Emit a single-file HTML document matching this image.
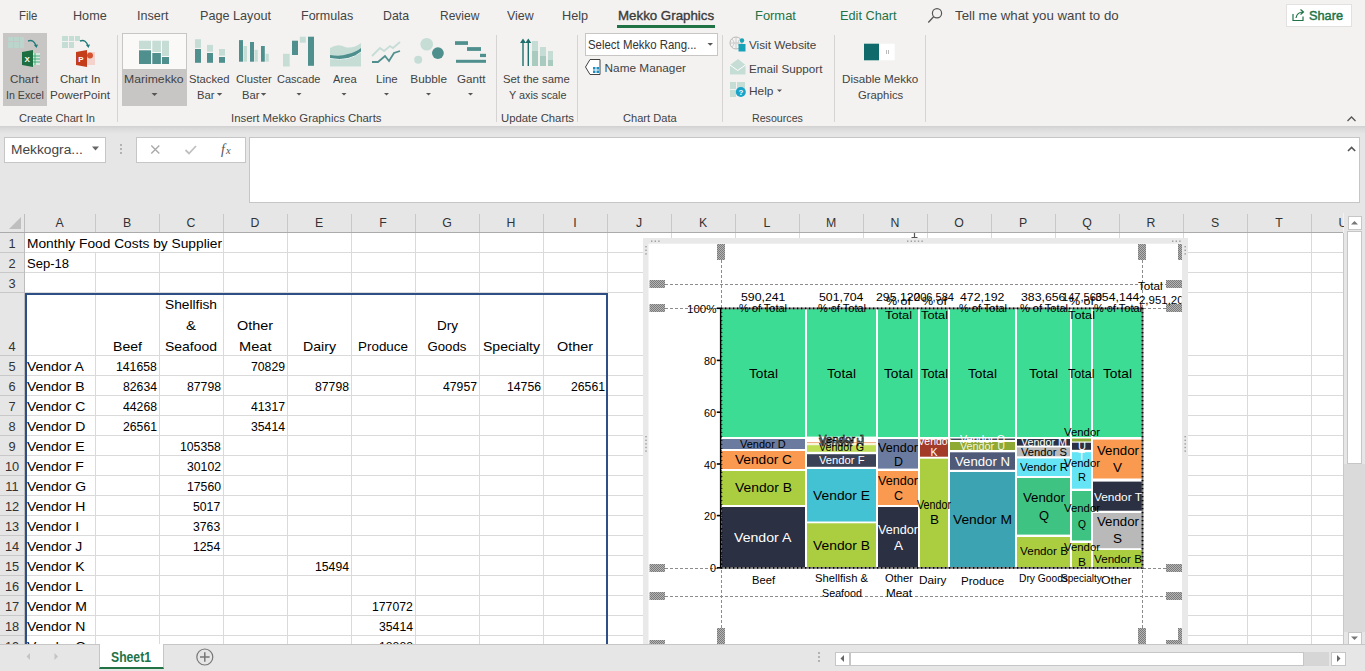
<!DOCTYPE html>
<html><head><meta charset="utf-8"><style>
*{margin:0;padding:0;box-sizing:border-box}
html,body{width:1365px;height:671px;overflow:hidden;background:#f3f2f1;position:relative;font-family:"Liberation Sans",sans-serif}
.t{position:absolute;white-space:pre;line-height:normal;transform-origin:0 0}
.a{position:absolute}
</style></head><body>
<!-- ribbon -->
<div class=a style="left:0;top:0;width:1365px;height:126px;background:#f3f2f1"></div>
<div class=a style="left:617px;top:25px;width:98px;height:3px;background:#217346"></div>
<div class=a style="left:1285.5px;top:3.5px;width:66.5px;height:23px;background:#fff;border:1px solid #e3e1df"></div>
<svg class=a style="left:0;top:0" width="1365" height="130">
 <!-- search -->
 <circle cx="937" cy="13.3" r="4.6" fill="none" stroke="#555" stroke-width="1.2"/>
 <line x1="933.6" y1="16.8" x2="928.3" y2="22.5" stroke="#555" stroke-width="1.3"/>
 <!-- share icon -->
 <path d="M1293 14 v6.5 h10 v-4" fill="none" stroke="#217346" stroke-width="1.2"/>
 <path d="M1296 18 q1 -6 7 -6 M1300.5 9.5 l3 2.5 l-3 2.5" fill="none" stroke="#217346" stroke-width="1.2"/>
 <!-- separators -->
 <g stroke="#d6d4d2" stroke-width="1">
  <line x1="117.5" y1="35" x2="117.5" y2="122"/><line x1="496.5" y1="35" x2="496.5" y2="122"/>
  <line x1="577.5" y1="35" x2="577.5" y2="122"/><line x1="722.5" y1="35" x2="722.5" y2="122"/>
  <line x1="834.5" y1="35" x2="834.5" y2="122"/><line x1="925.5" y1="35" x2="925.5" y2="122"/>
 </g>
 <!-- chart in excel highlight -->
 <rect x="3" y="33" width="44" height="73" fill="#c8c6c4"/>
 <!-- marimekko button -->
 <rect x="122" y="69" width="65" height="37" fill="#c8c6c4"/>
 <rect x="122.5" y="33.5" width="64" height="36" fill="#faf9f8" stroke="#c8c6c4"/>
 <!-- excel icon -->
 <g fill="#b9d9cf" opacity="0.8"><rect x="8" y="37" width="5" height="4"/><rect x="14" y="37" width="5" height="4"/><rect x="8" y="42" width="5" height="6"/><rect x="14" y="42" width="5" height="6"/><rect x="20" y="37" width="4" height="11"/></g>
 <path d="M28 41 q6 -2 8 5" fill="none" stroke="#1f7a7a" stroke-width="1.4"/><path d="M34 45 l2.5 3 l1.5 -3.5z" fill="#1f7a7a"/>
 <rect x="28" y="53" width="12" height="12" fill="#d5e8dd"/>
 <g stroke="#21a366" stroke-width="0.8"><line x1="29" y1="56" x2="40" y2="56"/><line x1="29" y1="59" x2="40" y2="59"/><line x1="29" y1="62" x2="40" y2="62"/><line x1="35" y1="53" x2="35" y2="65"/></g>
 <path d="M22 52 l11 -2 v17 l-11 -2z" fill="#1d6f42"/>
 <text x="24.5" y="62" font-family="Liberation Sans" font-size="8" font-weight="700" fill="#fff">X</text>
 <!-- powerpoint icon -->
 <g fill="#b9d9cf" opacity="0.8"><rect x="62" y="36" width="6" height="5"/><rect x="69" y="36" width="5" height="5"/><rect x="75" y="36" width="5" height="5"/><rect x="62" y="42" width="6" height="6"/><rect x="69" y="42" width="5" height="6"/></g>
 <path d="M80 41 q6 -2 8 5" fill="none" stroke="#1f7a7a" stroke-width="1.4"/><path d="M86 45 l2.5 3 l1.5 -3.5z" fill="#1f7a7a"/>
 <rect x="84" y="52" width="11" height="13" fill="#f4d3cc"/>
 <circle cx="90" cy="55.5" r="3" fill="#d35230"/>
 <path d="M76 52 l11 -2 v17 l-11 -2z" fill="#c43e1c"/>
 <text x="78.3" y="62" font-family="Liberation Sans" font-size="8" font-weight="700" fill="#fff">P</text>
 <!-- marimekko icon -->
 <g fill="#c6ddd6"><rect x="139" y="40.7" width="12" height="8.3"/><rect x="152.3" y="40.7" width="8.6" height="11.3"/><rect x="162" y="40.7" width="7" height="15.3"/></g>
 <g fill="#4f8f8e"><rect x="139" y="50.3" width="12" height="13.7"/><rect x="152.3" y="53" width="8.6" height="11"/><rect x="162" y="57" width="7" height="7"/></g>
 <!-- stacked bar -->
 <g fill="#c6ddd6"><rect x="195" y="39.2" width="6" height="8.7"/><rect x="207" y="44.9" width="6" height="6.7"/><rect x="219" y="49" width="6" height="6.6"/></g>
 <g fill="#4f8f8e"><rect x="195" y="49" width="6" height="13.8"/><rect x="207" y="53" width="6" height="9.8"/><rect x="219" y="57" width="6" height="5.8"/></g>
 <!-- cluster bar -->
 <g fill="#4f8f8e"><rect x="239" y="40.1" width="4" height="21.6"/><rect x="250" y="42" width="4" height="19.7"/><rect x="261" y="46" width="3.8" height="15.7"/></g>
 <g fill="#c6ddd6"><rect x="243.5" y="46" width="3.5" height="15.7"/><rect x="254.6" y="49.8" width="3.2" height="11.9"/><rect x="265.5" y="53.8" width="3.3" height="7.9"/></g>
 <!-- cascade -->
 <g fill="#c6ddd6"><rect x="283" y="53.8" width="6.7" height="12.7"/><rect x="299.8" y="36.7" width="6" height="6"/></g>
 <g fill="#4f8f8e"><rect x="292" y="40.7" width="6" height="14.3"/><rect x="308" y="36.7" width="6" height="29.1"/></g>
 <!-- area -->
 <path d="M330 48 q8 -5 15 -1 q8 2 16 -4 v23.5 h-31z" fill="#c6ddd6"/>
 <path d="M330 55 q10 2 18 -1 q8 -2 13 -6 v4 q-6 5 -13 6.5 q-9 2 -18 0z" fill="#4f8f8e"/>
 <path d="M330 58.5 q10 2 18 0 q8 -2 13 -6.5" fill="none" stroke="#e9f5f1" stroke-width="1"/>
 <!-- line -->
 <path d="M372 56 l8 -8 l4 3 l6 -5 l3 2 l7 -6" fill="none" stroke="#c6ddd6" stroke-width="1.8"/>
 <path d="M372 62 h6 l7 -6 l4 5 l5 -8 l6 -2" fill="none" stroke="#4f8f8e" stroke-width="1.8"/>
 <!-- bubble -->
 <circle cx="426.7" cy="44.2" r="6.3" fill="#c6ddd6"/><circle cx="437.9" cy="53.1" r="5.9" fill="#4f8f8e"/><circle cx="418.2" cy="59.8" r="4" fill="#c6ddd6"/>
 <!-- gantt -->
 <g fill="#4f8f8e"><rect x="455" y="41.2" width="13" height="3.7"/><rect x="467" y="47.1" width="14" height="3.8"/><rect x="480" y="53.8" width="6" height="3.3"/><rect x="456" y="59.8" width="30" height="3"/></g>
 <!-- dropdown arrows -->
 <g fill="#555">
  <path d="M151.5 93 h6 l-3 3z"/><path d="M216.8 93 h5.5 l-2.75 2.75z"/><path d="M260.8 93 h5.5 l-2.75 2.75z"/>
  <path d="M296.5 93 h5 l-2.5 2.5z"/><path d="M341.5 93 h5 l-2.5 2.5z"/><path d="M384 93 h5 l-2.5 2.5z"/>
  <path d="M426 93 h5 l-2.5 2.5z"/><path d="M468 93 h5 l-2.5 2.5z"/><path d="M777 89.5 h5 l-2.5 2.5z"/>
 </g>
 <!-- update charts icon -->
 <g stroke="#1f6e6e" stroke-width="1.4"><line x1="523" y1="41" x2="523" y2="66"/><line x1="528.3" y1="41" x2="528.3" y2="66"/></g>
 <g fill="#1f6e6e"><path d="M520 43 l3 -4.5 l3 4.5z"/><path d="M525.3 43 l3 -4.5 l3 4.5z"/></g>
 <g fill="#c6ddd6"><rect x="532" y="41" width="6" height="25"/><rect x="540" y="47" width="6" height="19"/><rect x="548" y="51" width="5" height="15"/></g>
 <g fill="#a9cbbf"><rect x="532" y="51" width="6" height="15"/><rect x="540" y="56" width="6" height="10"/><rect x="548" y="60" width="5" height="6"/></g>
 <!-- select box -->
 <rect x="585.5" y="33.5" width="132" height="22" fill="#fff" stroke="#c8c6c4"/>
 <path d="M707.5 43 h5.5 l-2.75 2.75z" fill="#555"/>
 <!-- name manager icon -->
 <path d="M590 59.5 h10 v15 h-10 l-4.5 -7.5z" fill="#fff" stroke="#444" stroke-width="1"/>
 <g fill="#1f8fbf"><rect x="593" y="67" width="2.5" height="2.5"/><rect x="596.5" y="67" width="2.5" height="2.5"/><rect x="593" y="70.5" width="2.5" height="2.5"/><rect x="596.5" y="70.5" width="2.5" height="2.5"/></g>
 <!-- visit website -->
 <circle cx="736" cy="43" r="6" fill="none" stroke="#b7b7b7" stroke-width="1"/>
 <path d="M730 43 h12 M736 37 v12 M732 39 q4 4 0 8 M740 39 q-4 4 0 8" stroke="#c4c4c4" fill="none" stroke-width="0.8"/>
 <circle cx="742" cy="40.5" r="2.2" fill="#17a2b8"/><path d="M738.5 44 h7 v7.5 h-7z" fill="#17a2b8"/>
 <!-- email -->
 <path d="M730 65 l8 -6 l7.5 6 v9.5 h-15.5z" fill="#c6ddd6"/><path d="M730 65 l7.7 5.5 l7.8 -5.5" fill="none" stroke="#fff" stroke-width="1"/>
 <!-- help -->
 <g fill="#c6ddd6"><rect x="730" y="82" width="6" height="7"/><rect x="737" y="82" width="8" height="7"/><rect x="730" y="90" width="6" height="7"/></g>
 <circle cx="740.8" cy="92" r="5" fill="#1aa3c8"/>
 <text x="738.6" y="95.2" font-family="Liberation Sans" font-size="8" font-weight="700" fill="#fff">?</text>
 <!-- disable toggle -->
 <rect x="864" y="43.7" width="15" height="16.6" fill="#0f6b6b"/>
 <rect x="879" y="43.7" width="15.7" height="16.6" fill="#fff"/>
 <g fill="#bbb"><rect x="886" y="50" width="1" height="4"/><rect x="888" y="50" width="1" height="4"/></g>
 <!-- collapse chevron -->
 <path d="M1347.5 121 l4 -4 l4 4" fill="none" stroke="#555" stroke-width="1.3"/>
</svg>
<!-- ribbon bottom / formula area -->
<div class=a style="left:0;top:126px;width:1365px;height:87px;background:#e6e6e6"></div>
<div class=a style="left:0;top:126px;width:1365px;height:8px;background:linear-gradient(#d0d0d0,#dadada 30%,#e6e6e6)"></div>
<div class=a style="left:4px;top:137px;width:102px;height:26px;background:#fff;border:1px solid #c6c6c6"></div>
<div class=a style="left:136px;top:137px;width:110px;height:26px;background:#fff;border:1px solid #c6c6c6"></div>
<div class=a style="left:249px;top:137px;width:1111px;height:66px;background:#fff;border:1px solid #c6c6c6"></div>
<svg class=a style="left:0;top:126px" width="1365" height="90">
 <path d="M92 21 h7 l-3.5 4z" fill="#666" transform="translate(0,-0.5)"/>
 <g fill="#9a9a9a"><circle cx="121" cy="19" r="0.9"/><circle cx="121" cy="23" r="0.9"/><circle cx="121" cy="27" r="0.9"/></g>
 <path d="M151.3 19.5 l8 8 M159.3 19.5 l-8 8" stroke="#a8a8a8" stroke-width="1.3"/>
 <path d="M185.5 24 l3.5 3.5 l7 -7.5" fill="none" stroke="#c0c0c0" stroke-width="1.8"/>
 <text x="221" y="27.5" font-family="Liberation Serif" font-style="italic" font-size="14" fill="#555">f</text>
 <text x="226" y="28" font-family="Liberation Serif" font-style="italic" font-size="10.5" fill="#555">x</text>
 <path d="M1348 25 l3.6 -3.6 l3.6 3.6" fill="none" stroke="#555" stroke-width="1.6"/>
</svg>
<svg style="position:absolute;left:0;top:0" width="1365" height="671">
<rect x="0" y="213" width="1343" height="20" fill="#e6e6e6"/>
<rect x="0" y="233" width="24" height="411" fill="#e6e6e6"/>
<rect x="24.5" y="233" width="1318.5" height="411" fill="#fff"/>
<line x1="95.5" y1="214" x2="95.5" y2="232" stroke="#c8c8c8"/>
<line x1="159.5" y1="214" x2="159.5" y2="232" stroke="#c8c8c8"/>
<line x1="223.5" y1="214" x2="223.5" y2="232" stroke="#c8c8c8"/>
<line x1="287.5" y1="214" x2="287.5" y2="232" stroke="#c8c8c8"/>
<line x1="351.5" y1="214" x2="351.5" y2="232" stroke="#c8c8c8"/>
<line x1="415.5" y1="214" x2="415.5" y2="232" stroke="#c8c8c8"/>
<line x1="479.5" y1="214" x2="479.5" y2="232" stroke="#c8c8c8"/>
<line x1="543.5" y1="214" x2="543.5" y2="232" stroke="#c8c8c8"/>
<line x1="607.5" y1="214" x2="607.5" y2="232" stroke="#c8c8c8"/>
<line x1="671.5" y1="214" x2="671.5" y2="232" stroke="#c8c8c8"/>
<line x1="735.5" y1="214" x2="735.5" y2="232" stroke="#c8c8c8"/>
<line x1="799.5" y1="214" x2="799.5" y2="232" stroke="#c8c8c8"/>
<line x1="863.5" y1="214" x2="863.5" y2="232" stroke="#c8c8c8"/>
<line x1="927.5" y1="214" x2="927.5" y2="232" stroke="#c8c8c8"/>
<line x1="991.5" y1="214" x2="991.5" y2="232" stroke="#c8c8c8"/>
<line x1="1055.5" y1="214" x2="1055.5" y2="232" stroke="#c8c8c8"/>
<line x1="1119.5" y1="214" x2="1119.5" y2="232" stroke="#c8c8c8"/>
<line x1="1183.5" y1="214" x2="1183.5" y2="232" stroke="#c8c8c8"/>
<line x1="1247.5" y1="214" x2="1247.5" y2="232" stroke="#c8c8c8"/>
<line x1="1311.5" y1="214" x2="1311.5" y2="232" stroke="#c8c8c8"/>
<line x1="24.5" y1="214" x2="24.5" y2="644" stroke="#bdbdbd"/>
<line x1="0" y1="232.5" x2="1343" y2="232.5" stroke="#ababab"/>
<polygon points="21,217 21,229 9,229" fill="#bfbfbf"/>
<line x1="0" y1="252.5" x2="24" y2="252.5" stroke="#c8c8c8"/>
<line x1="25" y1="252.5" x2="1343" y2="252.5" stroke="#dadada"/>
<line x1="0" y1="272.5" x2="24" y2="272.5" stroke="#c8c8c8"/>
<line x1="25" y1="272.5" x2="1343" y2="272.5" stroke="#dadada"/>
<line x1="0" y1="292.5" x2="24" y2="292.5" stroke="#c8c8c8"/>
<line x1="25" y1="292.5" x2="1343" y2="292.5" stroke="#dadada"/>
<line x1="0" y1="355.5" x2="24" y2="355.5" stroke="#c8c8c8"/>
<line x1="25" y1="355.5" x2="1343" y2="355.5" stroke="#dadada"/>
<line x1="0" y1="375.5" x2="24" y2="375.5" stroke="#c8c8c8"/>
<line x1="25" y1="375.5" x2="1343" y2="375.5" stroke="#dadada"/>
<line x1="0" y1="395.5" x2="24" y2="395.5" stroke="#c8c8c8"/>
<line x1="25" y1="395.5" x2="1343" y2="395.5" stroke="#dadada"/>
<line x1="0" y1="415.5" x2="24" y2="415.5" stroke="#c8c8c8"/>
<line x1="25" y1="415.5" x2="1343" y2="415.5" stroke="#dadada"/>
<line x1="0" y1="435.5" x2="24" y2="435.5" stroke="#c8c8c8"/>
<line x1="25" y1="435.5" x2="1343" y2="435.5" stroke="#dadada"/>
<line x1="0" y1="455.5" x2="24" y2="455.5" stroke="#c8c8c8"/>
<line x1="25" y1="455.5" x2="1343" y2="455.5" stroke="#dadada"/>
<line x1="0" y1="475.5" x2="24" y2="475.5" stroke="#c8c8c8"/>
<line x1="25" y1="475.5" x2="1343" y2="475.5" stroke="#dadada"/>
<line x1="0" y1="495.5" x2="24" y2="495.5" stroke="#c8c8c8"/>
<line x1="25" y1="495.5" x2="1343" y2="495.5" stroke="#dadada"/>
<line x1="0" y1="515.5" x2="24" y2="515.5" stroke="#c8c8c8"/>
<line x1="25" y1="515.5" x2="1343" y2="515.5" stroke="#dadada"/>
<line x1="0" y1="535.5" x2="24" y2="535.5" stroke="#c8c8c8"/>
<line x1="25" y1="535.5" x2="1343" y2="535.5" stroke="#dadada"/>
<line x1="0" y1="555.5" x2="24" y2="555.5" stroke="#c8c8c8"/>
<line x1="25" y1="555.5" x2="1343" y2="555.5" stroke="#dadada"/>
<line x1="0" y1="575.5" x2="24" y2="575.5" stroke="#c8c8c8"/>
<line x1="25" y1="575.5" x2="1343" y2="575.5" stroke="#dadada"/>
<line x1="0" y1="595.5" x2="24" y2="595.5" stroke="#c8c8c8"/>
<line x1="25" y1="595.5" x2="1343" y2="595.5" stroke="#dadada"/>
<line x1="0" y1="615.5" x2="24" y2="615.5" stroke="#c8c8c8"/>
<line x1="25" y1="615.5" x2="1343" y2="615.5" stroke="#dadada"/>
<line x1="0" y1="635.5" x2="24" y2="635.5" stroke="#c8c8c8"/>
<line x1="25" y1="635.5" x2="1343" y2="635.5" stroke="#dadada"/>
<line x1="0" y1="655.5" x2="24" y2="655.5" stroke="#c8c8c8"/>
<line x1="25" y1="655.5" x2="1343" y2="655.5" stroke="#dadada"/>
<line x1="95.5" y1="253" x2="95.5" y2="644" stroke="#dadada"/>
<line x1="159.5" y1="253" x2="159.5" y2="644" stroke="#dadada"/>
<line x1="223.5" y1="233" x2="223.5" y2="644" stroke="#dadada"/>
<line x1="287.5" y1="233" x2="287.5" y2="644" stroke="#dadada"/>
<line x1="351.5" y1="233" x2="351.5" y2="644" stroke="#dadada"/>
<line x1="415.5" y1="233" x2="415.5" y2="644" stroke="#dadada"/>
<line x1="479.5" y1="233" x2="479.5" y2="644" stroke="#dadada"/>
<line x1="543.5" y1="233" x2="543.5" y2="644" stroke="#dadada"/>
<line x1="607.5" y1="233" x2="607.5" y2="644" stroke="#dadada"/>
<line x1="671.5" y1="233" x2="671.5" y2="644" stroke="#dadada"/>
<line x1="735.5" y1="233" x2="735.5" y2="644" stroke="#dadada"/>
<line x1="799.5" y1="233" x2="799.5" y2="644" stroke="#dadada"/>
<line x1="863.5" y1="233" x2="863.5" y2="644" stroke="#dadada"/>
<line x1="927.5" y1="233" x2="927.5" y2="644" stroke="#dadada"/>
<line x1="991.5" y1="233" x2="991.5" y2="644" stroke="#dadada"/>
<line x1="1055.5" y1="233" x2="1055.5" y2="644" stroke="#dadada"/>
<line x1="1119.5" y1="233" x2="1119.5" y2="644" stroke="#dadada"/>
<line x1="1183.5" y1="233" x2="1183.5" y2="644" stroke="#dadada"/>
<line x1="1247.5" y1="233" x2="1247.5" y2="644" stroke="#dadada"/>
<line x1="1311.5" y1="233" x2="1311.5" y2="644" stroke="#dadada"/>
<line x1="1343.5" y1="233" x2="1343.5" y2="644" stroke="#c8c8c8"/>
<rect x="26" y="294" width="581" height="360" fill="none" stroke="#2d4f86" stroke-width="2"/>
</svg>
<svg style="position:absolute;left:0;top:0" width="1365" height="671" viewBox="0 0 1365 671">
<defs><pattern id="chk" width="2" height="2" patternUnits="userSpaceOnUse"><rect width="2" height="2" fill="#b4b4b4"/><rect width="1" height="1" fill="#7a7a7a"/><rect x="1" y="1" width="1" height="1" fill="#7a7a7a"/></pattern><clipPath id="gclip"><rect x="0" y="233" width="1343" height="411"/></clipPath></defs>
<g clip-path="url(#gclip)">
<rect x="643" y="238" width="545" height="420" fill="#e9e9e9"/>
<rect x="648.5" y="243.7" width="533.5" height="420" fill="#fff"/>
<rect x="721" y="308" width="84" height="129.0" fill="#3ddc94"/>
<rect x="721" y="439" width="84" height="10.0" fill="#6b7b9f"/>
<rect x="721" y="451" width="84" height="18.0" fill="#fa9a50"/>
<rect x="721" y="471" width="84" height="34.0" fill="#aace40"/>
<rect x="721" y="507" width="84" height="60.0" fill="#2b3142"/>
<rect x="807" y="308" width="69" height="128.6" fill="#3ddc94"/>
<rect x="807" y="442.1" width="69" height="0.9" fill="#f0a880"/>
<rect x="807" y="443.4" width="69" height="1.2" fill="#f3efc2"/>
<rect x="807" y="445.2" width="69" height="6.6" fill="#bfdc55"/>
<rect x="807" y="454.2" width="69" height="12.6" fill="#3b4256"/>
<rect x="807" y="469" width="69" height="52.5" fill="#42c2d3"/>
<rect x="807" y="523.3" width="69" height="43.7" fill="#aace40"/>
<rect x="878" y="308" width="40" height="129.0" fill="#3ddc94"/>
<rect x="878" y="439" width="40" height="29.6" fill="#6b7b9f"/>
<rect x="878" y="471" width="40" height="34.0" fill="#fa9a50"/>
<rect x="878" y="507" width="40" height="60.0" fill="#2b3142"/>
<rect x="920" y="308" width="28" height="129.0" fill="#3ddc94"/>
<rect x="920" y="439.5" width="28" height="17.2" fill="#a33b29"/>
<rect x="920" y="458.7" width="28" height="108.3" fill="#aace40"/>
<rect x="950" y="308" width="65" height="129.0" fill="#3ddc94"/>
<rect x="950" y="438.6" width="65" height="1.3" fill="#2b3142"/>
<rect x="950" y="442" width="65" height="8.0" fill="#8fa935"/>
<rect x="950" y="452.3" width="65" height="17.5" fill="#4f5a79"/>
<rect x="950" y="472" width="65" height="95.0" fill="#3ba3b1"/>
<rect x="1017" y="308" width="53" height="129.0" fill="#3ddc94"/>
<rect x="1017" y="439" width="53" height="6.6" fill="#2b3142"/>
<rect x="1017" y="447.4" width="53" height="8.9" fill="#b9b9b9"/>
<rect x="1017" y="458.5" width="53" height="17.5" fill="#65e4f5"/>
<rect x="1017" y="478" width="53" height="56.6" fill="#3ec382"/>
<rect x="1017" y="537" width="53" height="30.0" fill="#aace40"/>
<rect x="1072" y="308" width="19" height="129.0" fill="#3ddc94"/>
<rect x="1072" y="438.6" width="19" height="2.9" fill="#8fa935"/>
<rect x="1072" y="442.7" width="19" height="7.1" fill="#2b3142"/>
<rect x="1072" y="452.2" width="19" height="36.5" fill="#65e4f5"/>
<rect x="1072" y="491" width="19" height="49.5" fill="#3ec382"/>
<rect x="1072" y="543" width="19" height="24.0" fill="#aace40"/>
<rect x="1093" y="308" width="50" height="129.0" fill="#3ddc94"/>
<rect x="1093" y="439.6" width="50" height="38.9" fill="#fa9a50"/>
<rect x="1093" y="481.6" width="50" height="29.1" fill="#2b3142"/>
<rect x="1093" y="513" width="50" height="35.2" fill="#b9b9b9"/>
<rect x="1093" y="550" width="50" height="17.0" fill="#aace40"/>
<line x1="665" y1="284.5" x2="1166" y2="284.5" stroke="#8c8c8c" stroke-width="1" stroke-dasharray="3,2" fill="none"/>
<line x1="665" y1="308.5" x2="720" y2="308.5" stroke="#8c8c8c" stroke-width="1" stroke-dasharray="3,2" fill="none"/>
<line x1="1143" y1="308.5" x2="1166" y2="308.5" stroke="#8c8c8c" stroke-width="1" stroke-dasharray="3,2" fill="none"/>
<line x1="665" y1="568.5" x2="720" y2="568.5" stroke="#8c8c8c" stroke-width="1" stroke-dasharray="3,2" fill="none"/>
<line x1="1143" y1="568.5" x2="1166" y2="568.5" stroke="#8c8c8c" stroke-width="1" stroke-dasharray="3,2" fill="none"/>
<line x1="665" y1="596.5" x2="1166" y2="596.5" stroke="#8c8c8c" stroke-width="1" stroke-dasharray="3,2" fill="none"/>
<line x1="721.5" y1="260" x2="721.5" y2="628" stroke="#8c8c8c" stroke-width="1" stroke-dasharray="3,2" fill="none"/>
<line x1="1142.5" y1="260" x2="1142.5" y2="628" stroke="#8c8c8c" stroke-width="1" stroke-dasharray="3,2" fill="none"/>
<g fill="none">
<line x1="721" y1="308.4" x2="1143.5" y2="308.4" stroke="#777" stroke-width="1.8"/>
<line x1="721" y1="308.4" x2="1143.5" y2="308.4" stroke="#000" stroke-width="1.8" stroke-dasharray="1.3,2.7"/>
<line x1="721" y1="567.9" x2="1143.5" y2="567.9" stroke="#777" stroke-width="1.8"/>
<line x1="721" y1="567.9" x2="1143.5" y2="567.9" stroke="#000" stroke-width="1.8" stroke-dasharray="1.3,2.7"/>
<line x1="1142.5" y1="308" x2="1142.5" y2="568.5" stroke="#777" stroke-width="1.8"/>
<line x1="1142.5" y1="308" x2="1142.5" y2="568.5" stroke="#000" stroke-width="1.8" stroke-dasharray="1.3,2.7"/>
</g>
<line x1="720.6" y1="308" x2="720.6" y2="568.5" stroke="#000" stroke-width="1.4"/>
<line x1="721.8" y1="308" x2="721.8" y2="568.5" stroke="#000" stroke-width="1" stroke-dasharray="1,3"/>
<line x1="716.8" y1="308.3" x2="721" y2="308.3" stroke="#000" stroke-width="1.6"/>
<line x1="716.8" y1="360.4" x2="721" y2="360.4" stroke="#000" stroke-width="1.6"/>
<line x1="716.8" y1="412.2" x2="721" y2="412.2" stroke="#000" stroke-width="1.6"/>
<line x1="716.8" y1="464" x2="721" y2="464" stroke="#000" stroke-width="1.6"/>
<line x1="716.8" y1="515.6" x2="721" y2="515.6" stroke="#000" stroke-width="1.6"/>
<line x1="716.8" y1="567.8" x2="721" y2="567.8" stroke="#000" stroke-width="1.6"/>
<rect x="717" y="244" width="8" height="16" fill="url(#chk)"/>
<rect x="1138" y="244" width="8" height="16" fill="url(#chk)"/>
<rect x="1178" y="244" width="4" height="16" fill="url(#chk)"/>
<rect x="649.5" y="280" width="15.5" height="8" fill="url(#chk)"/>
<rect x="1166" y="280" width="16" height="8" fill="url(#chk)"/>
<rect x="649.5" y="304" width="15.5" height="8" fill="url(#chk)"/>
<rect x="1166" y="304" width="16" height="8" fill="url(#chk)"/>
<rect x="649.5" y="564" width="15.5" height="8" fill="url(#chk)"/>
<rect x="1166" y="564" width="16" height="8" fill="url(#chk)"/>
<rect x="649.5" y="592" width="15.5" height="8" fill="url(#chk)"/>
<rect x="1166" y="592" width="16" height="8" fill="url(#chk)"/>
<rect x="649.5" y="640" width="15.5" height="5" fill="url(#chk)"/>
<rect x="717" y="628" width="8" height="16" fill="url(#chk)"/>
<rect x="1138" y="628" width="8" height="16" fill="url(#chk)"/>
<rect x="1178" y="628" width="4" height="16" fill="url(#chk)"/>
<rect x="1166" y="640" width="16" height="4" fill="url(#chk)"/>
<g fill="#9a9a9a"><rect x="907.0" y="240.5" width="1.4" height="1.4"/><rect x="645.3" y="436.0" width="1.4" height="1.4"/><rect x="1184.5" y="436.0" width="1.4" height="1.4"/><rect x="910.6" y="240.5" width="1.4" height="1.4"/><rect x="645.3" y="439.6" width="1.4" height="1.4"/><rect x="1184.5" y="439.6" width="1.4" height="1.4"/><rect x="914.2" y="240.5" width="1.4" height="1.4"/><rect x="645.3" y="443.2" width="1.4" height="1.4"/><rect x="1184.5" y="443.2" width="1.4" height="1.4"/><rect x="917.8" y="240.5" width="1.4" height="1.4"/><rect x="645.3" y="446.8" width="1.4" height="1.4"/><rect x="1184.5" y="446.8" width="1.4" height="1.4"/><rect x="921.4" y="240.5" width="1.4" height="1.4"/><rect x="645.3" y="450.4" width="1.4" height="1.4"/><rect x="1184.5" y="450.4" width="1.4" height="1.4"/><rect x="651.0" y="240.5" width="1.4" height="1.4"/><rect x="645.3" y="246.0" width="1.4" height="1.4"/><rect x="1172.0" y="240.5" width="1.4" height="1.4"/><rect x="1184.5" y="246.0" width="1.4" height="1.4"/><rect x="654.6" y="240.5" width="1.4" height="1.4"/><rect x="645.3" y="249.6" width="1.4" height="1.4"/><rect x="1175.6" y="240.5" width="1.4" height="1.4"/><rect x="1184.5" y="249.6" width="1.4" height="1.4"/><rect x="658.2" y="240.5" width="1.4" height="1.4"/><rect x="645.3" y="253.2" width="1.4" height="1.4"/><rect x="1179.2" y="240.5" width="1.4" height="1.4"/><rect x="1184.5" y="253.2" width="1.4" height="1.4"/></g>
<path d="M914.5 233 v4.5 M911.5 237.5 h6" stroke="#555" stroke-width="1.2"/>
</g></svg>
<div class=t style='left:19.20px;top:8.42px;font-size:12.8px;color:#444;font-weight:400;transform:scaleX(0.8873);'>File</div>
<div class=t style='left:73.30px;top:8.42px;font-size:12.8px;color:#444;font-weight:400;transform:scaleX(0.9871);'>Home</div>
<div class=t style='left:137.00px;top:8.42px;font-size:12.8px;color:#444;font-weight:400;transform:scaleX(0.9839);'>Insert</div>
<div class=t style='left:200.00px;top:8.42px;font-size:12.8px;color:#444;font-weight:400;transform:scaleX(0.9878);'>Page Layout</div>
<div class=t style='left:301.30px;top:8.42px;font-size:12.8px;color:#444;font-weight:400;transform:scaleX(0.9786);'>Formulas</div>
<div class=t style='left:383.30px;top:8.42px;font-size:12.8px;color:#444;font-weight:400;transform:scaleX(0.9618);'>Data</div>
<div class=t style='left:439.60px;top:8.42px;font-size:12.8px;color:#444;font-weight:400;transform:scaleX(0.9388);'>Review</div>
<div class=t style='left:507.40px;top:8.42px;font-size:12.8px;color:#444;font-weight:400;transform:scaleX(0.9667);'>View</div>
<div class=t style='left:562.30px;top:8.42px;font-size:12.8px;color:#444;font-weight:400;transform:scaleX(0.9913);'>Help</div>
<div class=t style='left:617.70px;top:8.42px;font-size:12.8px;color:#3b3b3b;font-weight:400;transform:scaleX(1.0394);-webkit-text-stroke:0.35px #3b3b3b;'>Mekko Graphics</div>
<div class=t style='left:755.00px;top:8.42px;font-size:12.8px;color:#217346;font-weight:400;transform:scaleX(1.0091);'>Format</div>
<div class=t style='left:840.40px;top:8.42px;font-size:12.8px;color:#217346;font-weight:400;transform:scaleX(0.9946);'>Edit Chart</div>
<div class=t style='left:954.60px;top:8.42px;font-size:12.8px;color:#444;font-weight:400;transform:scaleX(1.0366);'>Tell me what you want to do</div>
<div class=t style='left:1309.00px;top:8.23px;font-size:13px;color:#217346;font-weight:400;transform:scaleX(0.9797);-webkit-text-stroke:0.45px #217346;'>Share</div>
<div class=t style='left:10.40px;top:72.12px;font-size:11.8px;color:#424242;font-weight:400;transform:scaleX(0.9841);'>Chart</div>
<div class=t style='left:5.70px;top:87.72px;font-size:11.8px;color:#424242;font-weight:400;transform:scaleX(0.9007);'>In Excel</div>
<div class=t style='left:59.60px;top:72.12px;font-size:11.8px;color:#424242;font-weight:400;transform:scaleX(0.9626);'>Chart In</div>
<div class=t style='left:50.00px;top:87.72px;font-size:11.8px;color:#424242;font-weight:400;transform:scaleX(0.9946);'>PowerPoint</div>
<div class=t style='left:19.40px;top:110.92px;font-size:11.8px;color:#424242;font-weight:400;transform:scaleX(0.9423);'>Create Chart In</div>
<div class=t style='left:124.20px;top:72.12px;font-size:11.8px;color:#424242;font-weight:400;transform:scaleX(1.0332);'>Marimekko</div>
<div class=t style='left:189.00px;top:72.12px;font-size:11.8px;color:#424242;font-weight:400;transform:scaleX(0.9498);'>Stacked</div>
<div class=t style='left:197.40px;top:87.72px;font-size:11.8px;color:#424242;font-weight:400;transform:scaleX(0.9532);'>Bar</div>
<div class=t style='left:235.70px;top:72.12px;font-size:11.8px;color:#424242;font-weight:400;transform:scaleX(0.9579);'>Cluster</div>
<div class=t style='left:241.70px;top:87.72px;font-size:11.8px;color:#424242;font-weight:400;transform:scaleX(0.9532);'>Bar</div>
<div class=t style='left:277.40px;top:72.12px;font-size:11.8px;color:#424242;font-weight:400;transform:scaleX(0.9342);'>Cascade</div>
<div class=t style='left:333.00px;top:72.12px;font-size:11.8px;color:#424242;font-weight:400;transform:scaleX(0.9470);'>Area</div>
<div class=t style='left:376.30px;top:72.12px;font-size:11.8px;color:#424242;font-weight:400;transform:scaleX(0.9725);'>Line</div>
<div class=t style='left:410.30px;top:72.12px;font-size:11.8px;color:#424242;font-weight:400;'>Bubble</div>
<div class=t style='left:456.50px;top:72.12px;font-size:11.8px;color:#424242;font-weight:400;transform:scaleX(0.9875);'>Gantt</div>
<div class=t style='left:231.20px;top:110.92px;font-size:11.8px;color:#424242;font-weight:400;transform:scaleX(0.9645);'>Insert Mekko Graphics Charts</div>
<div class=t style='left:503.20px;top:72.12px;font-size:11.8px;color:#424242;font-weight:400;transform:scaleX(0.9609);'>Set the same</div>
<div class=t style='left:508.50px;top:87.72px;font-size:11.8px;color:#424242;font-weight:400;transform:scaleX(0.9166);'>Y axis scale</div>
<div class=t style='left:500.50px;top:110.92px;font-size:11.8px;color:#424242;font-weight:400;transform:scaleX(0.9595);'>Update Charts</div>
<div class=t style='left:588.00px;top:38.28px;font-size:12.4px;color:#333;font-weight:400;transform:scaleX(0.9213);'>Select Mekko Rang...</div>
<div class=t style='left:604.60px;top:61.12px;font-size:11.8px;color:#424242;font-weight:400;'>Name Manager</div>
<div class=t style='left:622.70px;top:110.92px;font-size:11.8px;color:#424242;font-weight:400;transform:scaleX(0.9413);'>Chart Data</div>
<div class=t style='left:748.80px;top:38.32px;font-size:11.8px;color:#424242;font-weight:400;transform:scaleX(0.9946);'>Visit Website</div>
<div class=t style='left:749.30px;top:61.52px;font-size:11.8px;color:#424242;font-weight:400;transform:scaleX(0.9906);'>Email Support</div>
<div class=t style='left:749.30px;top:83.82px;font-size:11.8px;color:#424242;font-weight:400;transform:scaleX(1.0097);'>Help</div>
<div class=t style='left:752.40px;top:110.92px;font-size:11.8px;color:#424242;font-weight:400;transform:scaleX(0.9026);'>Resources</div>
<div class=t style='left:841.50px;top:72.12px;font-size:11.8px;color:#424242;font-weight:400;transform:scaleX(0.9861);'>Disable Mekko</div>
<div class=t style='left:857.60px;top:87.72px;font-size:11.8px;color:#424242;font-weight:400;transform:scaleX(0.9572);'>Graphics</div>
<div class=t style='left:11.40px;top:143.39px;font-size:12.5px;color:#444;font-weight:400;transform:scaleX(1.0993);'>Mekkogra...</div>
<div class=t style='left:55.40px;top:216.17px;font-size:12.3px;color:#333;font-weight:400;'>A</div>
<div class=t style='left:122.90px;top:216.17px;font-size:12.3px;color:#333;font-weight:400;'>B</div>
<div class=t style='left:186.55px;top:216.17px;font-size:12.3px;color:#333;font-weight:400;'>C</div>
<div class=t style='left:250.55px;top:216.17px;font-size:12.3px;color:#333;font-weight:400;'>D</div>
<div class=t style='left:314.90px;top:216.17px;font-size:12.3px;color:#333;font-weight:400;'>E</div>
<div class=t style='left:379.24px;top:216.17px;font-size:12.3px;color:#333;font-weight:400;'>F</div>
<div class=t style='left:442.21px;top:216.17px;font-size:12.3px;color:#333;font-weight:400;'>G</div>
<div class=t style='left:506.55px;top:216.17px;font-size:12.3px;color:#333;font-weight:400;'>H</div>
<div class=t style='left:573.29px;top:216.17px;font-size:12.3px;color:#333;font-weight:400;'>I</div>
<div class=t style='left:635.92px;top:216.17px;font-size:12.3px;color:#333;font-weight:400;'>J</div>
<div class=t style='left:698.90px;top:216.17px;font-size:12.3px;color:#333;font-weight:400;'>K</div>
<div class=t style='left:763.58px;top:216.17px;font-size:12.3px;color:#333;font-weight:400;'>L</div>
<div class=t style='left:825.88px;top:216.17px;font-size:12.3px;color:#333;font-weight:400;'>M</div>
<div class=t style='left:890.55px;top:216.17px;font-size:12.3px;color:#333;font-weight:400;'>N</div>
<div class=t style='left:954.21px;top:216.17px;font-size:12.3px;color:#333;font-weight:400;'>O</div>
<div class=t style='left:1018.90px;top:216.17px;font-size:12.3px;color:#333;font-weight:400;'>P</div>
<div class=t style='left:1082.21px;top:216.17px;font-size:12.3px;color:#333;font-weight:400;'>Q</div>
<div class=t style='left:1146.55px;top:216.17px;font-size:12.3px;color:#333;font-weight:400;'>R</div>
<div class=t style='left:1210.90px;top:216.17px;font-size:12.3px;color:#333;font-weight:400;'>S</div>
<div class=t style='left:1275.24px;top:216.17px;font-size:12.3px;color:#333;font-weight:400;'>T</div>
<div class=t style='left:1338.55px;top:216.17px;font-size:12.3px;color:#333;font-weight:400;'>U</div>
<div class=t style='left:8.44px;top:236.12px;font-size:12.8px;color:#333;font-weight:400;'>1</div>
<div class=t style='left:8.44px;top:256.12px;font-size:12.8px;color:#333;font-weight:400;'>2</div>
<div class=t style='left:8.44px;top:276.12px;font-size:12.8px;color:#333;font-weight:400;'>3</div>
<div class=t style='left:8.44px;top:339.12px;font-size:12.8px;color:#333;font-weight:400;'>4</div>
<div class=t style='left:8.44px;top:359.12px;font-size:12.8px;color:#333;font-weight:400;'>5</div>
<div class=t style='left:8.44px;top:379.12px;font-size:12.8px;color:#333;font-weight:400;'>6</div>
<div class=t style='left:8.44px;top:399.12px;font-size:12.8px;color:#333;font-weight:400;'>7</div>
<div class=t style='left:8.44px;top:419.12px;font-size:12.8px;color:#333;font-weight:400;'>8</div>
<div class=t style='left:8.44px;top:439.12px;font-size:12.8px;color:#333;font-weight:400;'>9</div>
<div class=t style='left:4.88px;top:459.12px;font-size:12.8px;color:#333;font-weight:400;'>10</div>
<div class=t style='left:5.35px;top:479.12px;font-size:12.8px;color:#333;font-weight:400;'>11</div>
<div class=t style='left:4.88px;top:499.12px;font-size:12.8px;color:#333;font-weight:400;'>12</div>
<div class=t style='left:4.88px;top:519.12px;font-size:12.8px;color:#333;font-weight:400;'>13</div>
<div class=t style='left:4.88px;top:539.12px;font-size:12.8px;color:#333;font-weight:400;'>14</div>
<div class=t style='left:4.88px;top:559.12px;font-size:12.8px;color:#333;font-weight:400;'>15</div>
<div class=t style='left:4.88px;top:579.12px;font-size:12.8px;color:#333;font-weight:400;'>16</div>
<div class=t style='left:4.88px;top:599.12px;font-size:12.8px;color:#333;font-weight:400;'>17</div>
<div class=t style='left:4.88px;top:619.12px;font-size:12.8px;color:#333;font-weight:400;'>18</div>
<div class=t style='left:4.88px;top:639.12px;font-size:12.8px;color:#333;font-weight:400;'>19</div>
<div class=t style='left:27.00px;top:235.75px;font-size:13.2px;color:#000;font-weight:400;transform:scaleX(1.0432);'>Monthly Food Costs by Supplier</div>
<div class=t style='left:27.00px;top:255.75px;font-size:13.2px;color:#000;font-weight:400;transform:scaleX(0.9875);'>Sep-18</div>
<div class=t style='left:112.50px;top:338.75px;font-size:13.2px;color:#000;font-weight:400;transform:scaleX(1.0685);'>Beef</div>
<div class=t style='left:165.00px;top:297.05px;font-size:13.2px;color:#000;font-weight:400;transform:scaleX(1.0429);'>Shellfish</div>
<div class=t style='left:186.00px;top:317.85px;font-size:13.2px;color:#000;font-weight:400;transform:scaleX(1.1368);'>&amp;</div>
<div class=t style='left:165.00px;top:338.75px;font-size:13.2px;color:#000;font-weight:400;transform:scaleX(1.0582);'>Seafood</div>
<div class=t style='left:237.00px;top:317.85px;font-size:13.2px;color:#000;font-weight:400;transform:scaleX(1.0914);'>Other</div>
<div class=t style='left:238.75px;top:338.75px;font-size:13.2px;color:#000;font-weight:400;transform:scaleX(1.1082);'>Meat</div>
<div class=t style='left:302.50px;top:338.75px;font-size:13.2px;color:#000;font-weight:400;transform:scaleX(1.0721);'>Dairy</div>
<div class=t style='left:358.00px;top:338.75px;font-size:13.2px;color:#000;font-weight:400;transform:scaleX(1.0178);'>Produce</div>
<div class=t style='left:436.50px;top:317.85px;font-size:13.2px;color:#000;font-weight:400;transform:scaleX(1.0236);'>Dry</div>
<div class=t style='left:427.50px;top:338.75px;font-size:13.2px;color:#000;font-weight:400;'>Goods</div>
<div class=t style='left:482.50px;top:338.75px;font-size:13.2px;color:#000;font-weight:400;transform:scaleX(1.0651);'>Specialty</div>
<div class=t style='left:557.00px;top:338.75px;font-size:13.2px;color:#000;font-weight:400;transform:scaleX(1.0914);'>Other</div>
<div class=t style='left:27.00px;top:358.75px;font-size:13.2px;color:#000;font-weight:400;transform:scaleX(1.0600);'>Vendor A</div>
<div class=t style='left:27.00px;top:378.75px;font-size:13.2px;color:#000;font-weight:400;transform:scaleX(1.0600);'>Vendor B</div>
<div class=t style='left:27.00px;top:398.75px;font-size:13.2px;color:#000;font-weight:400;transform:scaleX(1.0600);'>Vendor C</div>
<div class=t style='left:27.00px;top:418.75px;font-size:13.2px;color:#000;font-weight:400;transform:scaleX(1.0600);'>Vendor D</div>
<div class=t style='left:27.00px;top:438.75px;font-size:13.2px;color:#000;font-weight:400;transform:scaleX(1.0600);'>Vendor E</div>
<div class=t style='left:27.00px;top:458.75px;font-size:13.2px;color:#000;font-weight:400;transform:scaleX(1.0600);'>Vendor F</div>
<div class=t style='left:27.00px;top:478.75px;font-size:13.2px;color:#000;font-weight:400;transform:scaleX(1.0600);'>Vendor G</div>
<div class=t style='left:27.00px;top:498.75px;font-size:13.2px;color:#000;font-weight:400;transform:scaleX(1.0600);'>Vendor H</div>
<div class=t style='left:27.00px;top:518.75px;font-size:13.2px;color:#000;font-weight:400;transform:scaleX(1.0600);'>Vendor I</div>
<div class=t style='left:27.00px;top:538.75px;font-size:13.2px;color:#000;font-weight:400;transform:scaleX(1.0600);'>Vendor J</div>
<div class=t style='left:27.00px;top:558.75px;font-size:13.2px;color:#000;font-weight:400;transform:scaleX(1.0600);'>Vendor K</div>
<div class=t style='left:27.00px;top:578.75px;font-size:13.2px;color:#000;font-weight:400;transform:scaleX(1.0600);'>Vendor L</div>
<div class=t style='left:27.00px;top:598.75px;font-size:13.2px;color:#000;font-weight:400;transform:scaleX(1.0600);'>Vendor M</div>
<div class=t style='left:27.00px;top:618.75px;font-size:13.2px;color:#000;font-weight:400;transform:scaleX(1.0600);'>Vendor N</div>
<div class=t style='left:27.00px;top:638.75px;font-size:13.2px;color:#000;font-weight:400;transform:scaleX(1.0600);'>Vendor O</div>
<div class=t style='left:115.70px;top:358.75px;font-size:13.2px;color:#000;font-weight:400;transform:scaleX(0.9269);'>141658</div>
<div class=t style='left:250.50px;top:358.75px;font-size:13.2px;color:#000;font-weight:400;transform:scaleX(0.9271);'>70829</div>
<div class=t style='left:122.50px;top:378.75px;font-size:13.2px;color:#000;font-weight:400;transform:scaleX(0.9271);'>82634</div>
<div class=t style='left:186.50px;top:378.75px;font-size:13.2px;color:#000;font-weight:400;transform:scaleX(0.9271);'>87798</div>
<div class=t style='left:314.50px;top:378.75px;font-size:13.2px;color:#000;font-weight:400;transform:scaleX(0.9271);'>87798</div>
<div class=t style='left:442.50px;top:378.75px;font-size:13.2px;color:#000;font-weight:400;transform:scaleX(0.9271);'>47957</div>
<div class=t style='left:506.50px;top:378.75px;font-size:13.2px;color:#000;font-weight:400;transform:scaleX(0.9271);'>14756</div>
<div class=t style='left:570.50px;top:378.75px;font-size:13.2px;color:#000;font-weight:400;transform:scaleX(0.9271);'>26561</div>
<div class=t style='left:122.50px;top:398.75px;font-size:13.2px;color:#000;font-weight:400;transform:scaleX(0.9271);'>44268</div>
<div class=t style='left:250.50px;top:398.75px;font-size:13.2px;color:#000;font-weight:400;transform:scaleX(0.9271);'>41317</div>
<div class=t style='left:122.50px;top:418.75px;font-size:13.2px;color:#000;font-weight:400;transform:scaleX(0.9271);'>26561</div>
<div class=t style='left:250.50px;top:418.75px;font-size:13.2px;color:#000;font-weight:400;transform:scaleX(0.9271);'>35414</div>
<div class=t style='left:179.70px;top:438.75px;font-size:13.2px;color:#000;font-weight:400;transform:scaleX(0.9269);'>105358</div>
<div class=t style='left:186.50px;top:458.75px;font-size:13.2px;color:#000;font-weight:400;transform:scaleX(0.9271);'>30102</div>
<div class=t style='left:186.50px;top:478.75px;font-size:13.2px;color:#000;font-weight:400;transform:scaleX(0.9271);'>17560</div>
<div class=t style='left:193.30px;top:498.75px;font-size:13.2px;color:#000;font-weight:400;transform:scaleX(0.9269);'>5017</div>
<div class=t style='left:193.30px;top:518.75px;font-size:13.2px;color:#000;font-weight:400;transform:scaleX(0.9269);'>3763</div>
<div class=t style='left:193.30px;top:538.75px;font-size:13.2px;color:#000;font-weight:400;transform:scaleX(0.9269);'>1254</div>
<div class=t style='left:314.50px;top:558.75px;font-size:13.2px;color:#000;font-weight:400;transform:scaleX(0.9271);'>15494</div>
<div class=t style='left:371.70px;top:598.75px;font-size:13.2px;color:#000;font-weight:400;transform:scaleX(0.9269);'>177072</div>
<div class=t style='left:378.50px;top:618.75px;font-size:13.2px;color:#000;font-weight:400;transform:scaleX(0.9271);'>35414</div>
<div class=t style='left:378.50px;top:638.75px;font-size:13.2px;color:#000;font-weight:400;transform:scaleX(0.9271);'>18888</div>
<div class=t style='left:111.40px;top:649.71px;font-size:13.8px;color:#217346;font-weight:700;transform:scaleX(0.8840);z-index:5;'>Sheet1</div>
<div class=t style='left:686.70px;top:303.12px;font-size:10.5px;color:#000;font-weight:400;transform:scaleX(1.1020);'>100%</div>
<div class=t style='left:704.30px;top:354.92px;font-size:10.5px;color:#000;font-weight:400;transform:scaleX(1.0267);'>80</div>
<div class=t style='left:704.30px;top:407.12px;font-size:10.5px;color:#000;font-weight:400;transform:scaleX(1.0267);'>60</div>
<div class=t style='left:704.30px;top:458.52px;font-size:10.5px;color:#000;font-weight:400;transform:scaleX(1.0267);'>40</div>
<div class=t style='left:704.30px;top:510.12px;font-size:10.5px;color:#000;font-weight:400;transform:scaleX(1.0267);'>20</div>
<div class=t style='left:710.30px;top:561.82px;font-size:10.5px;color:#000;font-weight:400;transform:scaleX(1.0267);'>0</div>
<div class=t style='left:740.80px;top:290.96px;font-size:10.8px;color:#000;font-weight:400;transform:scaleX(1.1376);'>590,241</div>
<div class=t style='left:739.00px;top:301.96px;font-size:10.8px;color:#000;font-weight:400;transform:scaleX(1.0165);'>% of Total</div>
<div class=t style='left:819.30px;top:290.96px;font-size:10.8px;color:#000;font-weight:400;transform:scaleX(1.1376);'>501,704</div>
<div class=t style='left:817.50px;top:301.96px;font-size:10.8px;color:#000;font-weight:400;transform:scaleX(1.0165);'>% of Total</div>
<div class=t style='left:875.80px;top:290.96px;font-size:10.8px;color:#000;font-weight:400;transform:scaleX(1.1376);'>295,120</div>
<div class=t style='left:885.50px;top:294.96px;font-size:10.8px;color:#000;font-weight:400;transform:scaleX(1.1569);'>% of</div>
<div class=t style='left:884.50px;top:308.96px;font-size:10.8px;color:#000;font-weight:400;transform:scaleX(1.1836);'>Total</div>
<div class=t style='left:914.00px;top:290.96px;font-size:10.8px;color:#000;font-weight:400;transform:scaleX(1.0248);'>206,584</div>
<div class=t style='left:921.50px;top:294.96px;font-size:10.8px;color:#000;font-weight:400;transform:scaleX(1.1569);'>% of</div>
<div class=t style='left:920.50px;top:308.96px;font-size:10.8px;color:#000;font-weight:400;transform:scaleX(1.1836);'>Total</div>
<div class=t style='left:960.30px;top:290.96px;font-size:10.8px;color:#000;font-weight:400;transform:scaleX(1.1376);'>472,192</div>
<div class=t style='left:958.50px;top:301.96px;font-size:10.8px;color:#000;font-weight:400;transform:scaleX(1.0165);'>% of Total</div>
<div class=t style='left:1021.30px;top:290.96px;font-size:10.8px;color:#000;font-weight:400;transform:scaleX(1.1376);'>383,656</div>
<div class=t style='left:1019.50px;top:301.96px;font-size:10.8px;color:#000;font-weight:400;transform:scaleX(1.0165);'>% of Total</div>
<div class=t style='left:1061.50px;top:290.96px;font-size:10.8px;color:#000;font-weight:400;transform:scaleX(1.0248);'>147,560</div>
<div class=t style='left:1069.00px;top:294.96px;font-size:10.8px;color:#000;font-weight:400;transform:scaleX(1.1569);'>% of</div>
<div class=t style='left:1068.00px;top:308.96px;font-size:10.8px;color:#000;font-weight:400;transform:scaleX(1.1836);'>Total</div>
<div class=t style='left:1095.30px;top:290.96px;font-size:10.8px;color:#000;font-weight:400;transform:scaleX(1.1376);'>354,144</div>
<div class=t style='left:1093.50px;top:301.96px;font-size:10.8px;color:#000;font-weight:400;transform:scaleX(1.0165);'>% of Total</div>
<div class=t style='left:1137.65px;top:279.66px;font-size:10.8px;color:#000;font-weight:400;transform:scaleX(1.0827);'>Total</div>
<div class=t style='left:1139.00px;top:294.16px;font-size:10.8px;color:#000;font-weight:400;transform:scaleX(1.0615);clip-path:inset(0 8px 0 0);'>2,951,202</div>
<div class=t style='left:748.50px;top:366.61px;font-size:12.2px;color:#000;font-weight:400;transform:scaleX(1.1262);'>Total</div>
<div class=t style='left:827.00px;top:366.61px;font-size:12.2px;color:#000;font-weight:400;transform:scaleX(1.1262);'>Total</div>
<div class=t style='left:883.50px;top:366.61px;font-size:12.2px;color:#000;font-weight:400;transform:scaleX(1.1262);'>Total</div>
<div class=t style='left:920.50px;top:366.61px;font-size:12.2px;color:#000;font-weight:400;transform:scaleX(1.0485);'>Total</div>
<div class=t style='left:968.00px;top:366.61px;font-size:12.2px;color:#000;font-weight:400;transform:scaleX(1.1262);'>Total</div>
<div class=t style='left:1029.00px;top:366.61px;font-size:12.2px;color:#000;font-weight:400;transform:scaleX(1.1262);'>Total</div>
<div class=t style='left:1103.00px;top:366.61px;font-size:12.2px;color:#000;font-weight:400;transform:scaleX(1.1262);'>Total</div>
<div class=t style='left:1068.25px;top:366.61px;font-size:12.2px;color:#000;font-weight:400;transform:scaleX(1.0291);'>Total</div>
<div class=t style='left:740.10px;top:437.52px;font-size:10.5px;color:#000;font-weight:400;transform:scaleX(1.0461);'>Vendor D</div>
<div class=t style='left:734.50px;top:453.30px;font-size:12.4px;color:#000;font-weight:400;transform:scaleX(1.1031);'>Vendor C</div>
<div class=t style='left:734.50px;top:481.10px;font-size:12.4px;color:#000;font-weight:400;transform:scaleX(1.1180);'>Vendor B</div>
<div class=t style='left:734.35px;top:531.10px;font-size:12.4px;color:#fff;font-weight:400;transform:scaleX(1.1392);'>Vendor A</div>
<div class=t style='left:819.00px;top:433.32px;font-size:10.5px;color:#fff;font-weight:400;transform:scaleX(1.0856);-webkit-text-stroke:0.6px #000;'>Vendor J</div>
<div class=t style='left:819.00px;top:436.32px;font-size:10.5px;color:#fff;font-weight:400;transform:scaleX(1.0278);-webkit-text-stroke:0.6px #000;'>Vendor H</div>
<div class=t style='left:819.00px;top:441.32px;font-size:10.5px;color:#000;font-weight:400;transform:scaleX(1.0141);'>Vendor G</div>
<div class=t style='left:818.75px;top:454.46px;font-size:10.8px;color:#fff;font-weight:400;transform:scaleX(1.0381);'>Vendor F</div>
<div class=t style='left:813.00px;top:488.50px;font-size:12.4px;color:#000;font-weight:400;transform:scaleX(1.1180);'>Vendor E</div>
<div class=t style='left:813.00px;top:538.50px;font-size:12.4px;color:#000;font-weight:400;transform:scaleX(1.1180);'>Vendor B</div>
<div class=t style='left:878.00px;top:440.91px;font-size:12.2px;color:#000;font-weight:400;transform:scaleX(1.0352);'>Vendor</div>
<div class=t style='left:893.50px;top:454.91px;font-size:12.2px;color:#000;font-weight:400;transform:scaleX(1.0213);'>D</div>
<div class=t style='left:878.00px;top:473.91px;font-size:12.2px;color:#000;font-weight:400;transform:scaleX(1.0352);'>Vendor</div>
<div class=t style='left:893.50px;top:489.41px;font-size:12.2px;color:#000;font-weight:400;transform:scaleX(1.0213);'>C</div>
<div class=t style='left:878.00px;top:522.91px;font-size:12.2px;color:#fff;font-weight:400;transform:scaleX(1.0352);'>Vendor</div>
<div class=t style='left:893.50px;top:539.41px;font-size:12.2px;color:#fff;font-weight:400;transform:scaleX(1.1056);'>A</div>
<div class=t style='left:917.50px;top:434.82px;font-size:10.5px;color:#fff;font-weight:400;transform:scaleX(0.9915);'>Vendor</div>
<div class=t style='left:930.50px;top:446.32px;font-size:10.5px;color:#fff;font-weight:400;'>K</div>
<div class=t style='left:917.00px;top:498.41px;font-size:12.2px;color:#000;font-weight:400;transform:scaleX(0.8799);'>Vendor</div>
<div class=t style='left:929.50px;top:513.41px;font-size:12.2px;color:#000;font-weight:400;transform:scaleX(1.1056);'>B</div>
<div class=t style='left:960.00px;top:432.82px;font-size:10.5px;color:#fff;font-weight:400;transform:scaleX(1.0141);'>Vendor O</div>
<div class=t style='left:960.00px;top:439.82px;font-size:10.5px;color:#f4f4d8;font-weight:400;transform:scaleX(1.0278);'>Vendor U</div>
<div class=t style='left:955.00px;top:454.50px;font-size:12.4px;color:#fff;font-weight:400;transform:scaleX(1.0644);'>Vendor N</div>
<div class=t style='left:953.00px;top:512.80px;font-size:12.4px;color:#000;font-weight:400;transform:scaleX(1.1122);'>Vendor M</div>
<div class=t style='left:1020.50px;top:436.32px;font-size:10.5px;color:#fff;font-weight:400;transform:scaleX(1.0233);'>Vendor M</div>
<div class=t style='left:1020.50px;top:446.12px;font-size:10.5px;color:#000;font-weight:400;transform:scaleX(1.0647);'>Vendor S</div>
<div class=t style='left:1019.50px;top:461.45px;font-size:11.2px;color:#000;font-weight:400;transform:scaleX(1.0288);'>Vendor R</div>
<div class=t style='left:1022.50px;top:490.50px;font-size:12.4px;color:#000;font-weight:400;transform:scaleX(1.0692);'>Vendor</div>
<div class=t style='left:1038.50px;top:509.10px;font-size:12.4px;color:#000;font-weight:400;transform:scaleX(1.0373);'>Q</div>
<div class=t style='left:1019.50px;top:545.45px;font-size:11.2px;color:#000;font-weight:400;transform:scaleX(1.0428);'>Vendor B</div>
<div class=t style='left:1063.50px;top:426.36px;font-size:10.8px;color:#000;font-weight:400;transform:scaleX(1.0516);'>Vendor</div>
<div class=t style='left:1077.50px;top:439.66px;font-size:10.8px;color:#fff;font-weight:400;transform:scaleX(1.0240);'>U</div>
<div class=t style='left:1078.00px;top:449.66px;font-size:10.8px;color:#fff;font-weight:400;transform:scaleX(1.0591);'>T</div>
<div class=t style='left:1063.50px;top:457.36px;font-size:10.8px;color:#000;font-weight:400;transform:scaleX(1.0516);'>Vendor</div>
<div class=t style='left:1077.50px;top:471.36px;font-size:10.8px;color:#000;font-weight:400;transform:scaleX(1.0240);'>R</div>
<div class=t style='left:1063.50px;top:502.36px;font-size:10.8px;color:#000;font-weight:400;transform:scaleX(1.0516);'>Vendor</div>
<div class=t style='left:1077.50px;top:517.66px;font-size:10.8px;color:#000;font-weight:400;transform:scaleX(0.9517);'>Q</div>
<div class=t style='left:1063.50px;top:541.36px;font-size:10.8px;color:#000;font-weight:400;transform:scaleX(1.0516);'>Vendor</div>
<div class=t style='left:1077.50px;top:555.66px;font-size:10.8px;color:#000;font-weight:400;transform:scaleX(1.1106);'>B</div>
<div class=t style='left:1096.50px;top:443.50px;font-size:12.4px;color:#000;font-weight:400;transform:scaleX(1.0692);'>Vendor</div>
<div class=t style='left:1113.00px;top:460.50px;font-size:12.4px;color:#000;font-weight:400;transform:scaleX(1.0888);'>V</div>
<div class=t style='left:1093.50px;top:490.75px;font-size:11.2px;color:#fff;font-weight:400;transform:scaleX(1.0619);'>Vendor T</div>
<div class=t style='left:1096.50px;top:514.50px;font-size:12.4px;color:#000;font-weight:400;transform:scaleX(1.0692);'>Vendor</div>
<div class=t style='left:1113.00px;top:531.50px;font-size:12.4px;color:#000;font-weight:400;transform:scaleX(1.0888);'>S</div>
<div class=t style='left:1093.50px;top:552.95px;font-size:11.2px;color:#000;font-weight:400;transform:scaleX(1.0428);'>Vendor B</div>
<div class=t style='left:751.50px;top:574.16px;font-size:10.8px;color:#000;font-weight:400;transform:scaleX(1.0352);'>Beef</div>
<div class=t style='left:815.00px;top:572.16px;font-size:10.8px;color:#000;font-weight:400;transform:scaleX(1.0389);'>Shellfish &amp;</div>
<div class=t style='left:821.50px;top:586.66px;font-size:10.8px;color:#000;font-weight:400;transform:scaleX(0.9942);clip-path:inset(0 0 1px 0);'>Seafood</div>
<div class=t style='left:884.50px;top:572.16px;font-size:10.8px;color:#000;font-weight:400;transform:scaleX(1.0364);'>Other</div>
<div class=t style='left:885.50px;top:586.66px;font-size:10.8px;color:#000;font-weight:400;transform:scaleX(1.0826);'>Meat</div>
<div class=t style='left:919.25px;top:574.46px;font-size:10.8px;color:#000;font-weight:400;transform:scaleX(1.0911);'>Dairy</div>
<div class=t style='left:960.65px;top:574.66px;font-size:10.8px;color:#000;font-weight:400;transform:scaleX(1.0766);'>Produce</div>
<div class=t style='left:1018.70px;top:572.36px;font-size:10.8px;color:#000;font-weight:400;transform:scaleX(0.9494);'>Dry Goods</div>
<div class=t style='left:1061.00px;top:572.36px;font-size:10.8px;color:#000;font-weight:400;transform:scaleX(0.9312);'>Specialty</div>
<div class=t style='left:1100.65px;top:574.36px;font-size:10.8px;color:#000;font-weight:400;transform:scaleX(1.1364);'>Other</div>
<!-- tab bar --><div style="position:absolute;left:0;top:0;z-index:4"><!-- vertical scrollbar -->
<div class=a style="left:1344px;top:213px;width:21px;height:431px;background:#e6e6e6"></div>
<div class=a style="left:1344px;top:464px;width:21px;height:168px;background:#dadada"></div>
<div class=a style="left:1347.5px;top:215.5px;width:14px;height:14px;background:#fff;border:1px solid #c6c6c6"></div>
<div class=a style="left:1347px;top:231px;width:14.5px;height:233px;background:#fff;border:1px solid #c6c6c6"></div>
<div class=a style="left:1347.5px;top:631.5px;width:14px;height:13.5px;background:#fff;border:1px solid #c6c6c6"></div>
<svg class=a style="left:1340px;top:210px" width="25" height="440">
 <path d="M11 14.5 h7 l-3.5 -3.5z" fill="#777"/>
 <path d="M11 426.5 h7 l-3.5 3.5z" fill="#777"/>
</svg>

<div class=a style="left:0;top:644px;width:1365px;height:27px;background:#e6e6e6;border-top:1px solid #c6c6c6"></div>
<div class=a style="left:99px;top:644px;width:64.5px;height:25px;background:#fff;border-left:1px solid #c6c6c6;border-right:1px solid #c6c6c6;border-bottom:2px solid #217346"></div>
<div class=a style="left:849.5px;top:651.5px;width:454.5px;height:14px;background:#fff;border:1px solid #c6c6c6"></div>
<div class=a style="left:1304px;top:651.5px;width:25px;height:14px;background:#d6d6d6"></div>
<div class=a style="left:835px;top:651.5px;width:15px;height:14px;background:#fff;border:1px solid #c6c6c6"></div>
<div class=a style="left:1331px;top:651.5px;width:15px;height:14px;background:#fff;border:1px solid #c6c6c6"></div>
<svg class=a style="left:0;top:644px" width="1365" height="27">
 <path d="M30 9 v7 l-3.5 -3.5z" fill="#c4c4c4"/><path d="M54.5 9 v7 l3.5 -3.5z" fill="#c4c4c4"/>
 <circle cx="204.8" cy="13" r="8" fill="none" stroke="#777" stroke-width="1.2"/>
 <path d="M200 13 h9.6 M204.8 8.2 v9.6" stroke="#777" stroke-width="1.5"/>
 <g fill="#9a9a9a"><circle cx="819" cy="9" r="0.9"/><circle cx="819" cy="13" r="0.9"/><circle cx="819" cy="17" r="0.9"/></g>
 <path d="M844 11 v7 l-3.5 -3.5z" fill="#666"/>
 <path d="M1337 11 v7 l3.5 -3.5z" fill="#666"/>
</svg>
</div>
</body></html>
